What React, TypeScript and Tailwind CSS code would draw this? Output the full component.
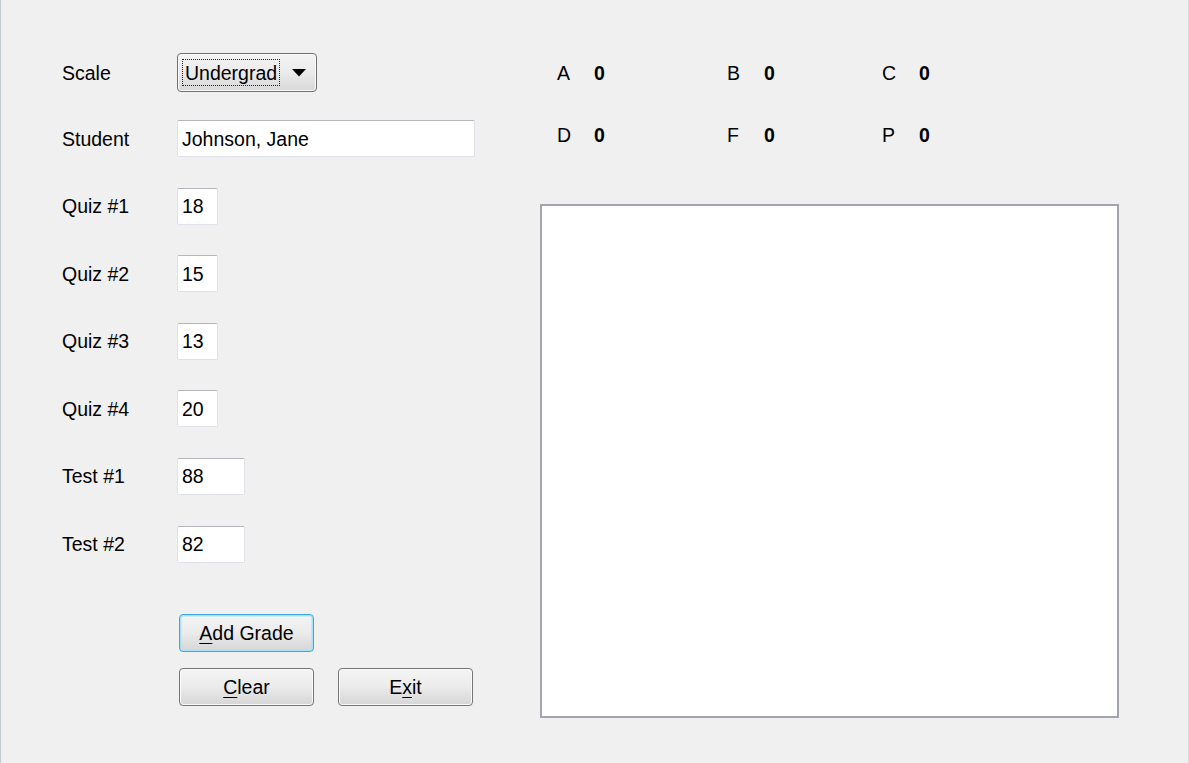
const rows = [
  { label: 'Quiz #1', value: '18', w: 'w-[41px]' },
  { label: 'Quiz #2', value: '15', w: 'w-[41px]' },
  { label: 'Quiz #3', value: '13', w: 'w-[41px]' },
  { label: 'Quiz #4', value: '20', w: 'w-[41px]' },
  { label: 'Test #1', value: '88', w: 'w-[68px]' },
  { label: 'Test #2', value: '82', w: 'w-[68px]' },
]

const grades = [
  ['A', 'B', 'C'],
  ['D', 'F', 'P'],
]

function TextBox({ value, className }: { value: string; className: string }) {
  return (
    <div
      className={`h-[37px] ${className} flex items-center pl-[4px] bg-white border border-[#dfe2e8] border-t-[#b5b7bc] rounded-[2px]`}
    >
      {value}
    </div>
  )
}

function WinButton({ children, focused }: { children: React.ReactNode; focused?: boolean }) {
  return (
    <div
      className={`w-[135px] h-[38px] flex items-center justify-center rounded-[4px] border-[1.5px] bg-gradient-to-b from-[#f4f4f4] via-[#ebebeb] to-[#d6d6d6] ${
        focused ? 'border-[#3ca7e4] shadow-[inset_0_0_0_1.5px_#a6e3fa]' : 'border-[#767676] shadow-[inset_0_0_0_1px_#fafafa]'
      }`}
    >
      {children}
    </div>
  )
}

export default function App() {
  return (
    <div className="h-[763px] w-full flex bg-[#f0f0f0] border-l border-l-[#c3c8d1] border-r border-r-[#dadde3] text-black text-[19.5px] leading-[22px] font-['Liberation_Sans',Arial,sans-serif]">
      {/* left side: inputs */}
      <div className="w-[539px] pl-[61px] pt-[53px] flex flex-col">
        <div className="flex items-center h-[39px]">
          <div className="w-[115px]">Scale</div>
          <div className="w-[140px] h-[39px] flex items-center rounded-[4px] border-[1.5px] border-[#707070] bg-gradient-to-b from-[#f4f4f4] via-[#ebebeb] to-[#d8d8d8] shadow-[inset_0_0_0_1px_#fafafa]">
            <div className="ml-[4px] h-[27px] px-[2px] flex items-center border border-dotted border-[#222]">Undergrad</div>
            <svg className="ml-[12px]" width="14" height="8" viewBox="0 0 14 8">
              <path d="M0 0 L14 0 L7 7.5 Z" fill="#000" />
            </svg>
          </div>
        </div>

        <div className="flex items-center mt-[28px]">
          <div className="w-[115px]">Student</div>
          <TextBox value="Johnson, Jane" className="w-[298px] pl-[3px]" />
        </div>

        {rows.map((r) => (
          <div key={r.label} className="flex items-center mt-[30.6px]">
            <div className="w-[115px]">{r.label}</div>
            <TextBox value={r.value} className={r.w} />
          </div>
        ))}

        <div className="ml-[117px] mt-[51px] flex flex-col gap-[16px]">
          <WinButton focused>
            <span>
              <span className="underline underline-offset-[3px]">A</span>dd Grade
            </span>
          </WinButton>
          <div className="flex gap-[24px]">
            <WinButton>
              <span>
                <span className="underline underline-offset-[3px]">C</span>lear
              </span>
            </WinButton>
            <WinButton>
              <span>
                E<span className="underline underline-offset-[3px]">x</span>it
              </span>
            </WinButton>
          </div>
        </div>
      </div>

      {/* right side: grade counts and list */}
      <div className="pt-[62px] flex flex-col">
        <div className="pl-[17px] flex flex-col gap-[40px]">
          {grades.map((row, i) => (
            <div key={i} className="flex h-[22px]">
              {row.map((g, j) => (
                <div key={g} className={`flex ${j === 0 ? 'w-[170px]' : j === 1 ? 'w-[155px]' : 'w-[60px]'}`}>
                  <span className="w-[37px]">{g}</span>
                  <span className="font-bold">0</span>
                </div>
              ))}
            </div>
          ))}
        </div>
        <div className="mt-[58px] w-[579px] h-[514px] bg-white border-2 border-[#a2a5ad]" />
      </div>
    </div>
  )
}
